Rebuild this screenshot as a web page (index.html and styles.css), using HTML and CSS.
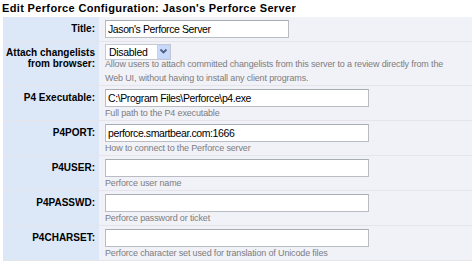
FILE: index.html
```html
<!DOCTYPE html>
<html lang="en">
<head>
    <meta charset="UTF-8">
    <title>Edit Perforce Configuration</title>
    <link rel="stylesheet" href="styles.css">
</head>
<body>
<div class="page">
    <h2 class="page-title">Edit Perforce Configuration: Jason's Perforce Server</h2>
    <table class="config">
        <tr class="row-title">
            <th class="label">Title:</th>
            <td class="value">
                <input type="text" class="text-input text-input--short" value="Jason's Perforce Server">
            </td>
        </tr>
        <tr class="row-attach">
            <th class="label">Attach changelists<br>from browser:</th>
            <td class="value">
                <div class="select">
                    <span class="select-text">Disabled</span>
                    <span class="select-button">
                        <svg width="9" height="7" viewBox="0 0 9 7">
                            <path d="M1.5 1.5 L4.5 4.5 L7.5 1.5" fill="none" stroke="#4d6185" stroke-width="1.8"/>
                        </svg>
                    </span>
                </div>
                <div class="help">Allow users to attach committed changelists from this server to a review directly from the<br>Web UI, without having to install any client programs.</div>
            </td>
        </tr>
        <tr>
            <th class="label">P4 Executable:</th>
            <td class="value">
                <input type="text" class="text-input" value="C:\Program Files\Perforce\p4.exe">
                <div class="help">Full path to the P4 executable</div>
            </td>
        </tr>
        <tr>
            <th class="label">P4PORT:</th>
            <td class="value">
                <input type="text" class="text-input" value="perforce.smartbear.com:1666">
                <div class="help">How to connect to the Perforce server</div>
            </td>
        </tr>
        <tr>
            <th class="label">P4USER:</th>
            <td class="value">
                <input type="text" class="text-input" value="">
                <div class="help">Perforce user name</div>
            </td>
        </tr>
        <tr>
            <th class="label">P4PASSWD:</th>
            <td class="value">
                <input type="password" class="text-input" value="">
                <div class="help">Perforce password or ticket</div>
            </td>
        </tr>
        <tr>
            <th class="label">P4CHARSET:</th>
            <td class="value">
                <input type="text" class="text-input" value="">
                <div class="help">Perforce character set used for translation of Unicode files</div>
            </td>
        </tr>
    </table>
</div>
</body>
</html>
```

FILE: styles.css
```css
html, body {
    margin: 0;
    background-color: white;
}

body {
    font-family: "Liberation Sans", Arial, sans-serif;
    font-size: 11px;
    color: black;
}

.page {
    padding: 2px 2px 0 3px;
}

/*页面标题*/
.page-title {
    margin: 0 0 0 -1px;
    height: 15px;
    font-size: 11px;
    line-height: 13px;
    font-weight: bold;
    letter-spacing: 0.35px;
}

/*配置表格*/
.config {
    border-collapse: collapse;
    width: 469px;
}

.config td, .config th {
    border-bottom: 1px solid #e4e4ea;
    vertical-align: top;
    padding: 0;
}

.label {
    width: 96px;
    background-color: #dce7f7;
    text-align: right;
    font-size: 10px;
    line-height: 11px;
    padding: 6px 4px 0 0 !important;
    box-sizing: border-box;
    white-space: nowrap;
}

.row-attach .label {
    padding-top: 5px !important;
}

.value {
    background-color: #f1f1f8;
    padding: 3px 0 0 6px !important;
    height: 35px;
    box-sizing: border-box;
}

.row-title .value {
    height: 24px;
}

.row-attach .value {
    height: 43px;
    padding-top: 2px !important;
}

.text-input {
    display: block;
    margin: 0;
    width: 264px;
    height: 18px;
    box-sizing: border-box;
    border: 1px solid #b9bdc3;
    border-top-color: #a9adb4;
    background-color: white;
    padding: 0 2px;
    font-family: "Liberation Sans", Arial, sans-serif;
    font-size: 10.5px;
    letter-spacing: -0.4px;
    color: black;
    outline: none;
}

.text-input--short {
    width: 184px;
}

/*下拉框*/
.select {
    display: flex;
    width: 66px;
    height: 16px;
    box-sizing: border-box;
    border: 1px solid #c4c8d0;
    background-color: white;
}

.select-text {
    flex: 1;
    padding-left: 3px;
    line-height: 14px;
    font-size: 10.5px;
    letter-spacing: -0.3px;
}

.select-button {
    width: 13px;
    height: 14px;
    box-sizing: border-box;
    border: 1px solid #c3d3fd;
    background-color: #c9d9fb;
    display: flex;
    align-items: center;
    justify-content: center;
}

.help {
    color: #7d7d7d;
    font-size: 9px;
    line-height: 13px;
    letter-spacing: -0.15px;
    white-space: nowrap;
}

.row-attach .help {
    margin-top: -3px;
    line-height: 14px;
}
```
